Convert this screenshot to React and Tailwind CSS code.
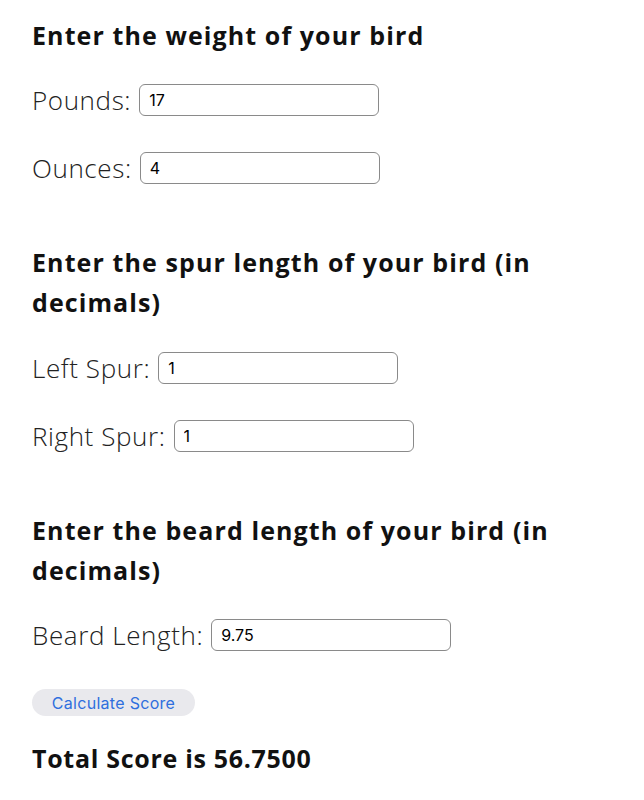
export default function App() {
  const heading = "text-[25px] leading-[40px] font-bold text-[#111] tracking-[1.1px]";
  const row = "flex items-center h-[32px]";
  const label = "text-[26px] font-light text-[#222] tracking-[0.6px] mr-[8px]";
  const input =
    "w-[240px] h-[32px] rounded-[6px] border border-[#8a8a8a] bg-white pl-[9px] text-[16px] text-black outline-none";
  const inputFont = { fontFamily: 'Inter, "Liberation Sans", sans-serif' };

  return (
    <div
      className="min-h-[800px] bg-white px-[32px] pt-[15px]"
      style={{ fontFamily: '"Open Sans", "DejaVu Sans", sans-serif' }}
    >
      <h2 className={heading}>Enter the weight of your bird</h2>
      <div className={`${row} mt-[29px]`}>
        <span className={label}>Pounds:</span>
        <input className={input} style={inputFont} defaultValue="17" />
      </div>
      <div className={`${row} mt-[36px]`}>
        <span className={label}>Ounces:</span>
        <input className={input} style={inputFont} defaultValue="4" />
      </div>

      <h2 className={`${heading} mt-[58px]`}>
        Enter the spur length of your bird (in decimals)
      </h2>
      <div className={`${row} mt-[30px]`}>
        <span className={label}>Left Spur:</span>
        <input className={input} style={inputFont} defaultValue="1" />
      </div>
      <div className={`${row} mt-[36px]`}>
        <span className={label}>Right Spur:</span>
        <input className={input} style={inputFont} defaultValue="1" />
      </div>

      <h2 className={`${heading} mt-[58px]`}>
        Enter the beard length of your bird (in decimals)
      </h2>
      <div className={`${row} mt-[29px]`}>
        <span className={label}>Beard Length:</span>
        <input className={input} style={inputFont} defaultValue="9.75" />
      </div>

      <button
        className="mt-[38px] h-[27px] w-[163px] rounded-full bg-[#e9e9ed] text-[16px] tracking-[0.3px] text-[#2f6fde]"
        style={inputFont}
      >
        Calculate Score
      </button>

      <h2 className="mt-[22px] text-[25px] leading-[40px] font-bold text-[#111] tracking-[0.7px]">
        Total Score is 56.7500
      </h2>
    </div>
  );
}
